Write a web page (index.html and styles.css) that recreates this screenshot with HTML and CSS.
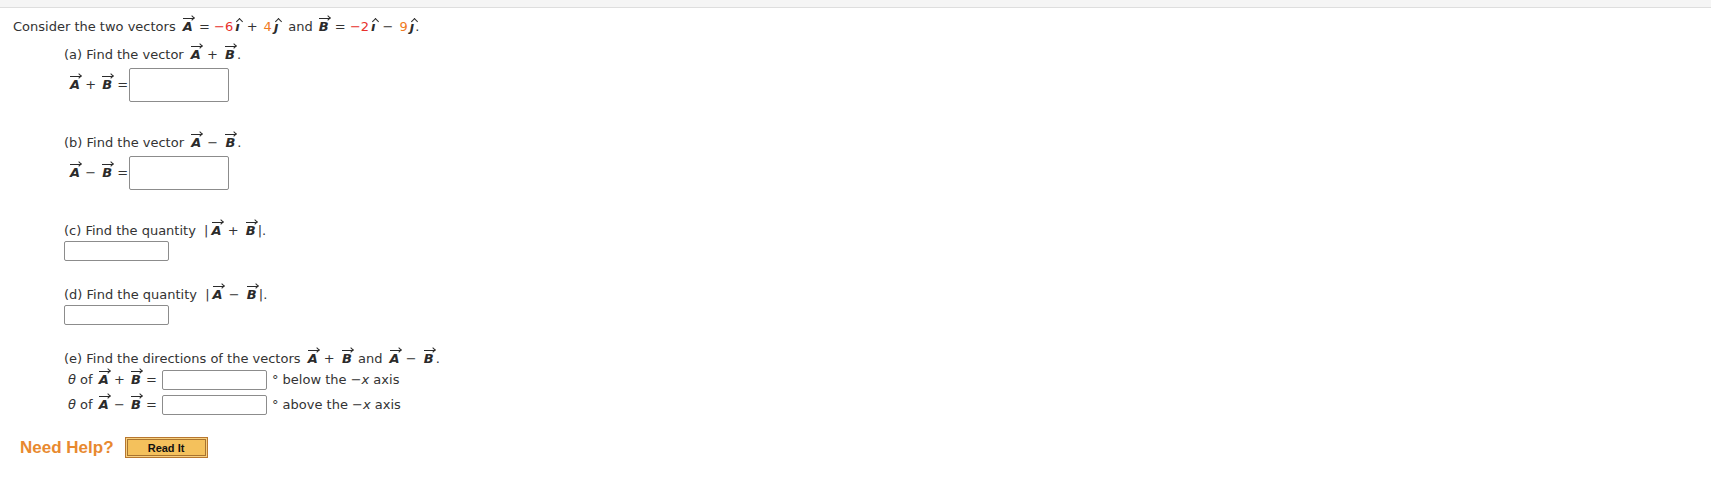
FILE: index.html
```html
<!DOCTYPE html>
<html>
<head>
  <title>Vector Question</title>
  <link rel="stylesheet" href="styles.css">
</head>

<body>
  <div class="topbar"></div>

  <main class="question">
    <p class="intro">
      Consider the two vectors <span class="vec">A</span> = <span class="red">−6</span><span class="hat">ı</span><span class="op">+</span><span class="orange">4</span><span class="hat">ȷ</span><span class="word">and</span><span class="vec">B</span> = <span class="red">−2</span><span class="hat">ı</span><span class="op">−</span><span class="orange">9</span><span class="hat">ȷ</span>.
    </p>

    <div class="part part-first">
      <p>(a) Find the vector <span class="vec">A</span> + <span class="vec">B</span>.</p>
      <div class="answer-row">
        <span class="answer-label"><span class="vec">A</span> + <span class="vec">B</span> =</span>
        <input type="text" class="field field-tall">
      </div>
    </div>

    <div class="part">
      <p>(b) Find the vector <span class="vec">A</span> − <span class="vec">B</span>.</p>
      <div class="answer-row">
        <span class="answer-label"><span class="vec">A</span> − <span class="vec">B</span> =</span>
        <input type="text" class="field field-tall">
      </div>
    </div>

    <div class="part">
      <p>(c) Find the quantity &nbsp;|<span class="vec">A</span> + <span class="vec">B</span>|.</p>
      <input type="text" class="field field-short">
    </div>

    <div class="part part-close">
      <p>(d) Find the quantity &nbsp;|<span class="vec">A</span> − <span class="vec">B</span>|.</p>
      <input type="text" class="field field-short">
    </div>

    <div class="part part-close">
      <p>(e) Find the directions of the vectors <span class="vec">A</span> + <span class="vec">B</span> and <span class="vec">A</span> − <span class="vec">B</span>.</p>
      <div class="angle-row">
        <span class="answer-label"><i>θ</i> of <span class="vec">A</span> + <span class="vec">B</span> =</span>
        <input type="text" class="field field-short">
        <span class="unit">° below the −<i>x</i> axis</span>
      </div>
      <div class="angle-row">
        <span class="answer-label"><i>θ</i> of <span class="vec">A</span> − <span class="vec">B</span> =</span>
        <input type="text" class="field field-short">
        <span class="unit">° above the −<i>x</i> axis</span>
      </div>
    </div>

    <div class="help">
      <span class="help-title">Need Help?</span>
      <button type="button" class="help-button">Read It</button>
    </div>
  </main>
</body>

</html>
```

FILE: styles.css
```css
* {
  box-sizing: border-box;
}

body {
  margin: 0;
  font-family: "DejaVu Sans", Verdana, sans-serif;
  font-size: 13px;
  line-height: 20px;
  color: #333333;
  background-color: #ffffff;
}

.topbar {
  height: 8px;
  background-color: #f5f5f5;
  border-bottom: 1px solid #dedede;
}

.question {
  padding-left: 13px;
}

p {
  margin: 0;
}

.intro {
  margin-top: 9px;
}

.part {
  margin-top: 31px;
  padding-left: 51px;
}

.part-first {
  margin-top: 8px;
}

.part-close {
  margin-top: 24px;
}

.red {
  color: #e8312c;
}

.orange {
  color: #f07a22;
}

.op {
  margin: 0 6px;
}

.word {
  margin: 0 3px 0 9px;
}

/* vector letter with arrow on top */
.vec {
  position: relative;
  display: inline-block;
  font-weight: bold;
  font-style: italic;
  color: #2b2b2b;
  padding-left: 1px;
  margin: 0 2px;
}

.vec::before {
  content: "";
  position: absolute;
  left: 1px;
  right: -1px;
  top: 1px;
  height: 1px;
  background-color: #2b2b2b;
}

.vec::after {
  content: "";
  position: absolute;
  right: -1px;
  top: -1px;
  width: 3px;
  height: 3px;
  border-top: 1px solid #2b2b2b;
  border-right: 1px solid #2b2b2b;
  transform: rotate(45deg);
}

.answer-label .vec {
  margin: 0 1px;
}

/* unit vector with hat */
.hat {
  position: relative;
  display: inline-block;
  font-weight: bold;
  font-style: italic;
  color: #2b2b2b;
  padding: 0 1px 0 2px;
}

.hat::before {
  content: "";
  position: absolute;
  left: 4px;
  top: 2px;
  width: 4px;
  height: 4px;
  border-top: 1.5px solid #2b2b2b;
  border-left: 1.5px solid #2b2b2b;
  transform: rotate(45deg);
}

.answer-row {
  display: flex;
  align-items: center;
  gap: 1px;
  margin-top: 3px;
  padding-left: 4px;
}

.angle-row {
  display: flex;
  align-items: center;
  gap: 5px;
  margin-top: 5px;
  padding-left: 4px;
}

.part p + .angle-row {
  margin-top: 1px;
}

.field {
  display: block;
  margin: 0;
  padding: 2px 4px;
  border: 1px solid #8c8c8c;
  border-radius: 2px;
  background-color: #ffffff;
  font-family: inherit;
  font-size: 13px;
}

.field-tall {
  width: 100px;
  height: 34px;
}

.field-short {
  width: 105px;
  height: 20px;
}

.help {
  display: flex;
  align-items: center;
  gap: 11px;
  margin-top: 22px;
  padding-left: 7px;
}

.help-title {
  font-family: "Liberation Sans", Arial, sans-serif;
  font-size: 17px;
  font-weight: bold;
  color: #e8892f;
}

.help-button {
  width: 83px;
  height: 21px;
  padding: 0;
  border: 1px solid #b8772f;
  background-color: #f4c15c;
  box-shadow: inset 0 0 0 1px #f7d07f, inset 0 0 0 2px #a8732f;
  font-family: "Liberation Sans", Arial, sans-serif;
  font-size: 11px;
  font-weight: bold;
  color: #111111;
  cursor: pointer;
}
```
